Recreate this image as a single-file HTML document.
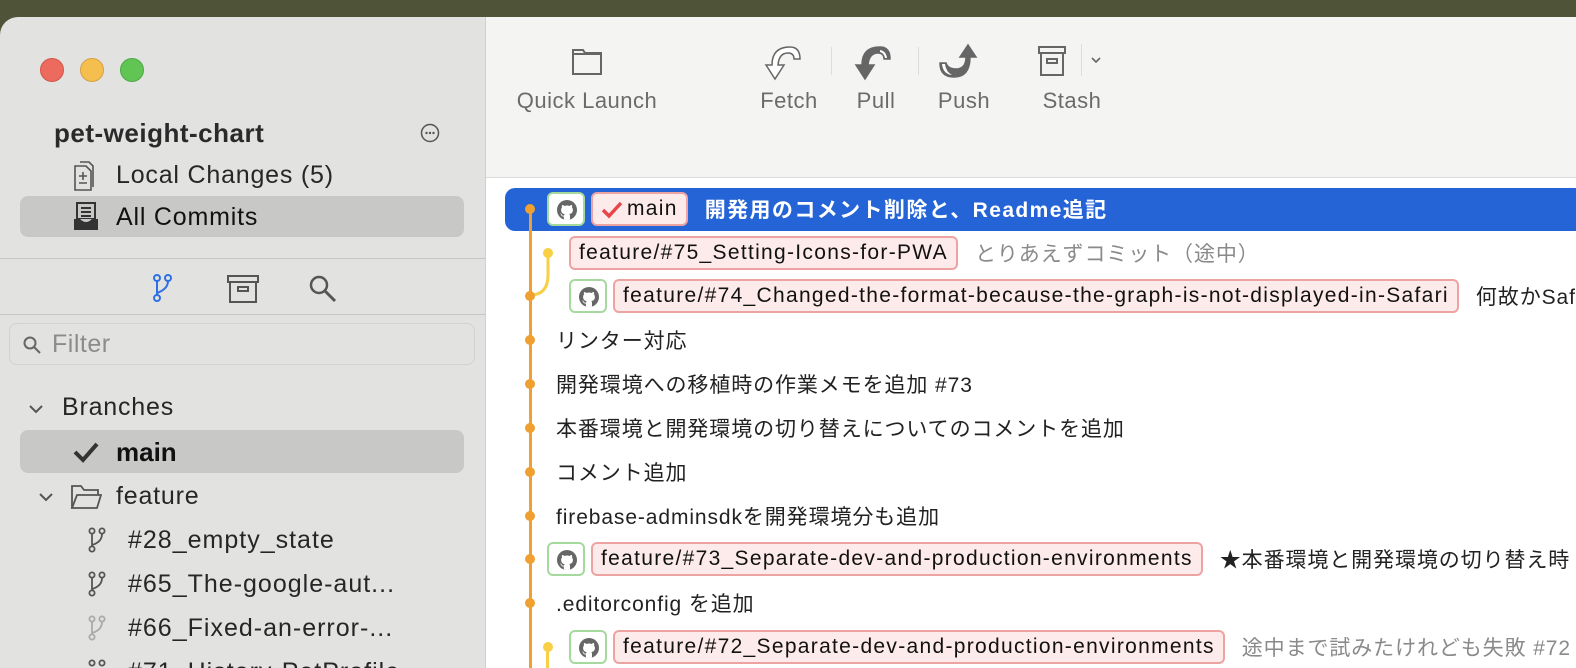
<!DOCTYPE html>
<html><head><meta charset="utf-8">
<style>
*{margin:0;padding:0;box-sizing:border-box}
body{width:1576px;height:668px;overflow:hidden;background:#4f5338;font-family:"Liberation Sans","Noto Sans CJK JP",sans-serif;position:relative}
.a{position:absolute;white-space:nowrap}
#side{position:absolute;left:0;top:17px;width:486px;height:651px;background:#e2e2e1;border-top-left-radius:18px;border-right:1px solid #d0d0d0;overflow:hidden}
#main{position:absolute;left:486px;top:17px;width:1090px;height:651px;background:#fff;overflow:hidden}
#tb{position:absolute;left:0;top:0;width:1090px;height:161px;background:#f4f4f3;border-bottom:1px solid #dcdcdc}
.dot{position:absolute;width:24px;height:24px;border-radius:50%}
.st{font-size:25px;letter-spacing:0.8px;color:#262626}
.br{font-size:25px;letter-spacing:1px;color:#262626}
.tl{font-size:22px;letter-spacing:0.5px;color:#6b6b6b;position:absolute;top:71px;width:200px;text-align:center}
.row{position:absolute;height:44px;display:flex;align-items:center;white-space:nowrap}
.badge{height:34px;border:2px solid #eea3a3;background:#fdeaea;border-radius:6px;font-size:21px;letter-spacing:1.3px;color:#111;line-height:30px;padding:0 8px;white-space:nowrap;position:relative;margin-right:17px}
.gh{width:38px;height:34px;border:2px solid #a6d99e;background:#fff;border-radius:6px;position:relative;margin-right:6px;flex:none}
.gh svg{position:absolute;left:8px;top:6px}
.msg{font-size:21px;letter-spacing:0.9px;color:#222;white-space:nowrap}
.gray{color:#8a8a8a}
.cd{position:absolute;width:10px;height:10px;border-radius:50%;background:#f0a030}
</style></head><body>
<svg width="0" height="0" style="position:absolute"><defs><symbol id="gh" viewBox="0 0 16 16"><circle cx="8" cy="8" r="8" fill="#666"/><path fill="#fff" d="M5.5 15.6v-2.3c-1.8 0-2.2-1.2-2.5-1.8-.3-.5-.7-.7-.7-.7h.4c.6 0 1 .7 1.2 1 .5.8 1.3.8 1.7.6.1-.6.4-.9.6-1.1C4.5 11 3.3 10.2 3.3 7.9c0-.8.3-1.4.7-1.9-.1-.3-.3-1.1.1-2 .8 0 1.6.6 1.9.8a6 6 0 014 0c.3-.2 1.1-.8 1.9-.8.4.9.2 1.7.1 2 .4.5.7 1.1.7 1.9 0 2.3-1.2 3.1-2.9 3.3.3.3.6.8.6 1.5v2.9a8 8 0 01-5 0z"/></symbol></defs></svg>
<div id="side">
 <div class="dot" style="left:40px;top:41px;background:#ed6a5e;border:1px solid #d25448"></div>
 <div class="dot" style="left:80px;top:41px;background:#f5bf4f;border:1px solid #d6a13e"></div>
 <div class="dot" style="left:120px;top:41px;background:#61c554;border:1px solid #4ea845"></div>
 <div class="a" style="left:54px;top:101px;font-size:26px;letter-spacing:0.5px;font-weight:bold;color:#2a2a2a">pet-weight-chart</div>
 <svg class="a" style="left:420px;top:106px" width="20" height="20" viewBox="0 0 20 20"><circle cx="10" cy="10" r="8.5" fill="none" stroke="#555" stroke-width="1.5"/><circle cx="6.5" cy="10" r="1.2" fill="#555"/><circle cx="10" cy="10" r="1.2" fill="#555"/><circle cx="13.5" cy="10" r="1.2" fill="#555"/></svg>
 <svg class="a" style="left:73px;top:143px" width="26" height="32" viewBox="0 0 26 32"><path d="M7 2h9l4 4v21" fill="none" stroke="#555" stroke-width="1.6"/><path d="M2 6h11l5 5v19H2z" fill="none" stroke="#555" stroke-width="1.6"/><path d="M10 12v8M6 16h8M6 23h8" stroke="#555" stroke-width="1.6"/></svg>
 <div class="a st" style="left:116px;top:144px">Local Changes (5)</div>
 <div class="a" style="left:20px;top:179px;width:444px;height:41px;background:#c8c8c7;border-radius:8px"></div>
 <svg class="a" style="left:73px;top:184px" width="26" height="30" viewBox="0 0 26 30"><path d="M4 2h18v16H4z" fill="none" stroke="#333" stroke-width="2"/><path d="M8 7h10M8 11h10M8 15h10" stroke="#333" stroke-width="2"/><path d="M1 18h24v11H1z" fill="#333"/><path d="M7 18q6 6 12 0" fill="#c8c8c7"/></svg>
 <div class="a st" style="left:116px;top:186px;color:#111">All Commits</div>
 <div class="a" style="left:0;top:241px;width:486px;height:1px;background:#c6c6c6"></div>
 <svg class="a" style="left:152px;top:257px" width="22" height="28" viewBox="0 0 22 28"><circle cx="5" cy="4" r="3" fill="none" stroke="#2f6fe4" stroke-width="2"/><circle cx="16" cy="4" r="3" fill="none" stroke="#2f6fe4" stroke-width="2"/><circle cx="5" cy="24" r="3" fill="none" stroke="#2f6fe4" stroke-width="2"/><path d="M5 7v14M16 7q0 8-11 12" fill="none" stroke="#2f6fe4" stroke-width="2"/></svg>
 <svg class="a" style="left:227px;top:258px" width="32" height="28" viewBox="0 0 32 28"><path d="M1 1h30v6H1zM3 7h26v20H3z" fill="none" stroke="#555" stroke-width="2"/><path d="M11 12h10v4H11z" fill="none" stroke="#555" stroke-width="2"/></svg>
 <svg class="a" style="left:308px;top:257px" width="30" height="30" viewBox="0 0 30 30"><circle cx="11" cy="11" r="8" fill="none" stroke="#555" stroke-width="2.5"/><path d="M17 17l10 10" stroke="#555" stroke-width="3"/></svg>
 <div class="a" style="left:0;top:297px;width:486px;height:1px;background:#c6c6c6"></div>
 <div class="a" style="left:9px;top:306px;width:466px;height:42px;border:1px solid #d2d2d2;border-radius:8px;background:#e2e2e1"></div>
 <svg class="a" style="left:22px;top:318px" width="20" height="20" viewBox="0 0 20 20"><circle cx="8" cy="8" r="5.5" fill="none" stroke="#666" stroke-width="2"/><path d="M12 12l6 6" stroke="#666" stroke-width="2"/></svg>
 <div class="a" style="left:52px;top:313px;font-size:25px;letter-spacing:0.5px;color:#8c8c8c">Filter</div>
 <svg class="a" style="left:28px;top:386px" width="16" height="12" viewBox="0 0 16 12"><path d="M2 3l6 6 6-6" fill="none" stroke="#555" stroke-width="2"/></svg>
 <div class="a st" style="left:62px;top:376px">Branches</div>
 <div class="a" style="left:20px;top:413px;width:444px;height:43px;background:#c8c8c7;border-radius:8px"></div>
 <svg class="a" style="left:73px;top:424px" width="26" height="22" viewBox="0 0 26 22"><path d="M2 11l8 8L24 3" fill="none" stroke="#333" stroke-width="4"/></svg>
 <div class="a" style="left:116px;top:420px;font-size:26px;font-weight:bold;color:#111">main</div>
 <svg class="a" style="left:38px;top:474px" width="16" height="12" viewBox="0 0 16 12"><path d="M2 3l6 6 6-6" fill="none" stroke="#555" stroke-width="2"/></svg>
 <svg class="a" style="left:70px;top:467px" width="32" height="26" viewBox="0 0 32 26"><path d="M2 24V2h9l3 4h14v5" fill="none" stroke="#555" stroke-width="1.8"/><path d="M2 24l5-13h24l-4 13z" fill="none" stroke="#555" stroke-width="1.8"/></svg>
 <div class="a st" style="left:116px;top:465px">feature</div>
 <svg class="a" style="left:88px;top:510px" width="20" height="26" viewBox="0 0 20 26"><circle cx="4" cy="4" r="2.6" fill="none" stroke="#555" stroke-width="1.8"/><circle cx="14" cy="4" r="2.6" fill="none" stroke="#555" stroke-width="1.8"/><circle cx="4" cy="22" r="2.6" fill="none" stroke="#555" stroke-width="1.8"/><path d="M4 7v12M14 7q0 8-10 11" fill="none" stroke="#555" stroke-width="1.8"/></svg>
 <div class="a br" style="left:128px;top:509px">#28_empty_state</div>
 <svg class="a" style="left:88px;top:554px" width="20" height="26" viewBox="0 0 20 26"><circle cx="4" cy="4" r="2.6" fill="none" stroke="#555" stroke-width="1.8"/><circle cx="14" cy="4" r="2.6" fill="none" stroke="#555" stroke-width="1.8"/><circle cx="4" cy="22" r="2.6" fill="none" stroke="#555" stroke-width="1.8"/><path d="M4 7v12M14 7q0 8-10 11" fill="none" stroke="#555" stroke-width="1.8"/></svg>
 <div class="a br" style="left:128px;top:553px">#65_The-google-aut...</div>
 <svg class="a" style="left:88px;top:598px" width="20" height="26" viewBox="0 0 20 26"><circle cx="4" cy="4" r="2.6" fill="none" stroke="#aaa" stroke-width="1.8"/><circle cx="14" cy="4" r="2.6" fill="none" stroke="#aaa" stroke-width="1.8"/><circle cx="4" cy="22" r="2.6" fill="none" stroke="#aaa" stroke-width="1.8"/><path d="M4 7v12M14 7q0 8-10 11" fill="none" stroke="#aaa" stroke-width="1.8"/></svg>
 <div class="a br" style="left:128px;top:597px">#66_Fixed-an-error-...</div>
 <svg class="a" style="left:88px;top:642px" width="20" height="26" viewBox="0 0 20 26"><circle cx="4" cy="4" r="2.6" fill="none" stroke="#555" stroke-width="1.8"/><circle cx="14" cy="4" r="2.6" fill="none" stroke="#555" stroke-width="1.8"/></svg>
 <div class="a br" style="left:128px;top:641px">#71_History-PetProfile</div>
</div>
<div id="main">
 <div id="tb">
  <svg class="a" style="left:86px;top:30px" width="30" height="28" viewBox="0 0 30 28"><path d="M1 3h10l2 3h16v21H1z" fill="none" stroke="#666" stroke-width="2"/><path d="M1 7h28" stroke="#666" stroke-width="2"/></svg>
  <div class="tl" style="left:1px">Quick Launch</div>
  <svg class="a" style="left:276px;top:28px" width="40" height="36" viewBox="0 0 40 36"><path d="M10 20q0-18 18-18 10 0 10 12h-6q0-6-6-6-9 0-10 12h6l-9 14-9-14z" fill="#fff" stroke="#666" stroke-width="1.5"/></svg>
  <div class="tl" style="left:203px">Fetch</div>
  <div class="a" style="left:345px;top:30px;width:1px;height:28px;background:#ddd"></div>
  <svg class="a" style="left:366px;top:28px" width="40" height="36" viewBox="0 0 40 36"><path d="M10 20q0-18 18-18 10 0 10 12h-6q0-6-6-6-9 0-10 12h6l-9 14-9-14z" fill="#666" stroke="#666" stroke-width="1.5"/><path d="M28 5q6 1 7 8h-2q-1-5-5-6z" fill="#fff"/></svg>
  <div class="tl" style="left:290px">Pull</div>
  <div class="a" style="left:432px;top:30px;width:1px;height:28px;background:#ddd"></div>
  <svg class="a" style="left:452px;top:26px" width="40" height="38" viewBox="0 0 40 38"><path d="M2 20q0 14 14 14 16 0 16-20h6L30 2 22 14h6q0 12-10 12-8 0-10-6z" fill="#666" stroke="#666" stroke-width="1.5"/><path d="M4 21q1 10 10 11-6-3-7-11z" fill="#fff"/></svg>
  <div class="tl" style="left:378px">Push</div>
  <svg class="a" style="left:552px;top:28px" width="28" height="32" viewBox="0 0 28 32"><path d="M1 2h26v6H1zM3 8h22v22H3z" fill="none" stroke="#666" stroke-width="2"/><path d="M9 14h10v4H9z" fill="none" stroke="#666" stroke-width="2"/></svg>
  <div class="a" style="left:595px;top:27px;width:1px;height:32px;background:#ddd"></div>
  <svg class="a" style="left:604px;top:38px" width="12" height="10" viewBox="0 0 12 10"><path d="M2 3l4 4 4-4" fill="none" stroke="#666" stroke-width="1.6"/></svg>
  <div class="tl" style="left:486px">Stash</div>
 </div>
 <div class="a" style="left:19px;top:171px;width:1071px;height:43px;background:#2564d7;border-radius:10px 0 0 10px"></div>
 <div class="a" style="left:43px;top:192px;width:3px;height:460px;background:#f0a030"></div>
 <svg class="a" style="left:40px;top:230px" width="30" height="60" viewBox="0 0 30 60"><path d="M22 6v22q0 20-18 20" fill="none" stroke="#f8cf45" stroke-width="3"/></svg>
 <div class="cd" style="left:39px;top:187px"></div>
 <div class="cd" style="left:57px;top:231px;background:#f8cf45"></div>
 <div class="cd" style="left:39px;top:274px"></div>
 <div class="cd" style="left:39px;top:318px"></div>
 <div class="cd" style="left:39px;top:362px"></div>
 <div class="cd" style="left:39px;top:406px"></div>
 <div class="cd" style="left:39px;top:450px"></div>
 <div class="cd" style="left:39px;top:494px"></div>
 <div class="cd" style="left:39px;top:537px"></div>
 <div class="cd" style="left:39px;top:581px"></div>
 <div class="cd" style="left:57px;top:625px;background:#f8cf45"></div>
 <div class="a" style="left:60px;top:632px;width:3px;height:30px;background:#f8cf45"></div>

 <div class="row" style="left:61px;top:170px">
  <div class="gh"><svg width="20" height="20"><use href="#gh"/></svg></div>
  <div class="badge" style="padding-left:34px">main<svg class="a" style="left:8px;top:7px" width="22" height="18" viewBox="0 0 22 18"><path d="M2 9l6 6L20 2" fill="none" stroke="#e8454a" stroke-width="3.5"/></svg></div>
  <div class="msg" style="color:#fff;font-weight:bold;font-size:21px;letter-spacing:1.4px">開発用のコメント削除と、Readme追記</div>
 </div>
 <div class="row" style="left:83px;top:214px">
  <div class="badge">feature/#75_Setting-Icons-for-PWA</div>
  <div class="msg gray">とりあえずコミット（途中）</div>
 </div>
 <div class="row" style="left:83px;top:257px">
  <div class="gh"><svg width="20" height="20"><use href="#gh"/></svg></div>
  <div class="badge">feature/#74_Changed-the-format-because-the-graph-is-not-displayed-in-Safari</div>
  <div class="msg">何故かSafariで</div>
 </div>
 <div class="row" style="left:70px;top:301px"><div class="msg">リンター対応</div></div>
 <div class="row" style="left:70px;top:345px"><div class="msg">開発環境への移植時の作業メモを追加 #73</div></div>
 <div class="row" style="left:70px;top:389px"><div class="msg">本番環境と開発環境の切り替えについてのコメントを追加</div></div>
 <div class="row" style="left:70px;top:433px"><div class="msg">コメント追加</div></div>
 <div class="row" style="left:70px;top:477px"><div class="msg">firebase-adminsdkを開発環境分も追加</div></div>
 <div class="row" style="left:61px;top:520px">
  <div class="gh"><svg width="20" height="20"><use href="#gh"/></svg></div>
  <div class="badge">feature/#73_Separate-dev-and-production-environments</div>
  <div class="msg">★本番環境と開発環境の切り替え時</div>
 </div>
 <div class="row" style="left:70px;top:564px"><div class="msg">.editorconfig を追加</div></div>
 <div class="row" style="left:83px;top:608px">
  <div class="gh"><svg width="20" height="20"><use href="#gh"/></svg></div>
  <div class="badge">feature/#72_Separate-dev-and-production-environments</div>
  <div class="msg gray">途中まで試みたけれども失敗 #72</div>
 </div>
</div>
</body></html>
